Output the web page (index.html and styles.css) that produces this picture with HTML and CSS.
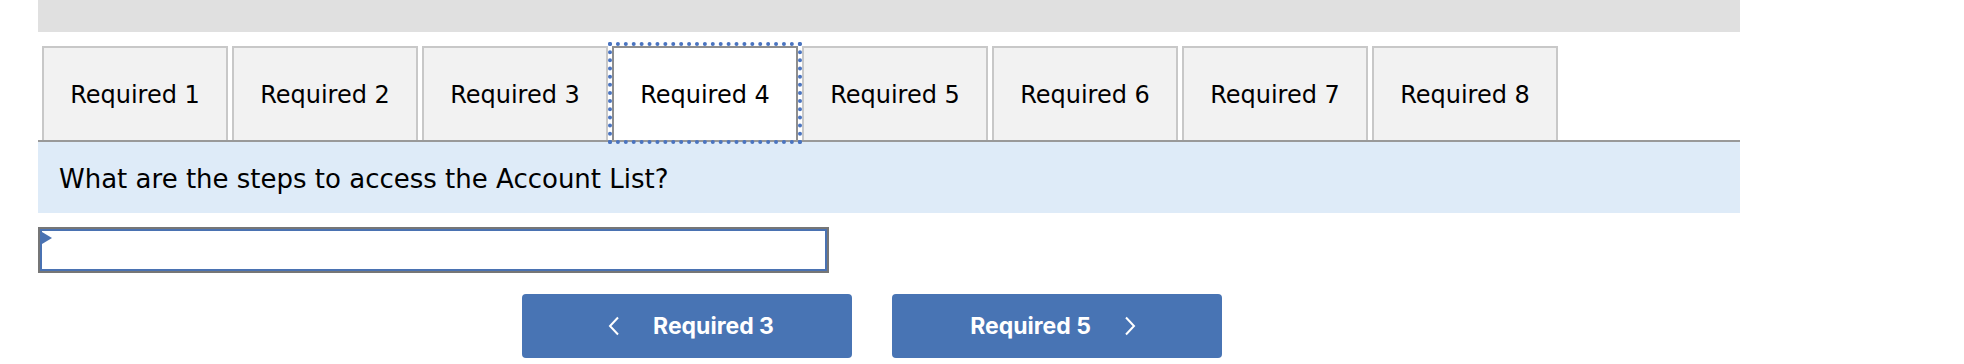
FILE: index.html
```html
<!DOCTYPE html>
<html>
<head>
<meta charset="utf-8">
<link rel="stylesheet" href="styles.css">
</head>
<body>
<div class="page">
  <div class="topbar"></div>
  <div class="tabs">
    <div class="tab">Required 1</div>
    <div class="tab">Required 2</div>
    <div class="tab">Required 3</div>
    <div class="tab active">Required 4</div>
    <div class="tab">Required 5</div>
    <div class="tab">Required 6</div>
    <div class="tab">Required 7</div>
    <div class="tab">Required 8</div>
  </div>
  <div class="question">What are the steps to access the Account List?</div>
  <div class="answer"><span class="marker"></span></div>
  <div class="nav">
    <button class="navbtn prev">
      <svg class="chev" width="12" height="20" viewBox="0 0 12 20"><path d="M10 1.5 L2 10 L10 18.5" fill="none" stroke="#fff" stroke-width="2"/></svg>
      <span>Required 3</span>
    </button>
    <button class="navbtn next">
      <span>Required 5</span>
      <svg class="chev" width="12" height="20" viewBox="0 0 12 20"><path d="M2 1.5 L10 10 L2 18.5" fill="none" stroke="#fff" stroke-width="2"/></svg>
    </button>
  </div>
</div>
</body>
</html>
```

FILE: styles.css
```css
* { box-sizing: border-box; }
html, body { margin: 0; padding: 0; background: #fff; }
.page {
  margin-left: 38px;
  width: 1702px;
  font-family: "DejaVu Sans", Verdana, sans-serif;
  color: #000;
}
.topbar {
  height: 32px;
  background: #e0e0e0;
}
.tabs {
  display: flex;
  gap: 4px;
  margin-top: 14px;
  padding-left: 4px;
  border-bottom: 2px solid #999;
}
.tab {
  width: 186px;
  height: 94px;
  background: #f2f2f2;
  border: 2px solid #c8c8c8;
  border-bottom: none;
  display: flex;
  align-items: center;
  justify-content: center;
  padding-top: 2px;
  font-size: 24px;
}
.tab.active {
  background: #fff;
  border-color: #8e8e8e;
  outline: 4px dotted #4a74c0;
  position: relative;
  z-index: 1;
}
.question {
  height: 71px;
  background: #deebf8;
  padding-left: 21px;
  padding-top: 24px;
  font-size: 26px;
  line-height: 1;
}
.answer {
  position: relative;
  margin-top: 14px;
  width: 791px;
  height: 46px;
  border: 2px solid #767676;
  box-shadow: inset 0 0 0 2px #4a72b2;
}
.marker {
  position: absolute;
  left: 2px;
  top: 3px;
  width: 0;
  height: 0;
  border-top: 6px solid transparent;
  border-bottom: 6px solid transparent;
  border-left: 10px solid #4a72b2;
}
.nav {
  display: flex;
  gap: 40px;
  margin-top: 21px;
  padding-left: 484px;
}
.navbtn {
  width: 330px;
  height: 64px;
  background: #4874b4;
  border: none;
  border-radius: 4px;
  color: #fff;
  font-family: Inter, Roboto, sans-serif;
  font-weight: 700;
  font-size: 23px;
  display: flex;
  align-items: center;
  justify-content: center;
  gap: 33px;
  padding: 0;
}
.navbtn.prev { padding-left: 8px; }
.navbtn.next { padding-right: 8px; }
.chev { display: block; }
```
